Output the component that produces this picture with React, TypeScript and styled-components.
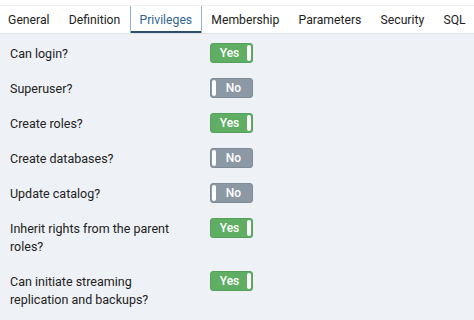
import styled, { createGlobalStyle } from "styled-components";

// #eef1f5 (content bg)
// #5fae63 (yes), #8d98a5 (no)
// #326690 (active tab)

const GlobalStyle = createGlobalStyle`
  body {
    margin: 0;
    background: #ffffff;
    font-family: Roboto, "Liberation Sans", sans-serif;
    color: #222222;
  }
`;

const Page = styled.div`
  width: 474px;
  height: 320px;
  display: flex;
  flex-direction: column;
  overflow: hidden;
`;

const TabBar = styled.div`
  flex-shrink: 0;
  margin-top: 5px;
  height: 27px;
  display: flex;
  flex-direction: row;
  border-top: 1px solid #eceef1;
  border-bottom: 1px solid #dfe3e8;
  margin-left: -1.5px;
`;

const Tab = styled.div<{ $active?: boolean }>`
  display: flex;
  align-items: center;
  padding: 0 8.6px;
  font-size: 12.2px;
  white-space: nowrap;
  color: ${(p) => (p.$active ? "#326690" : "#222222")};
  border-left: 1px solid ${(p) => (p.$active ? "#8fb1d3" : "transparent")};
  border-right: 1px solid ${(p) => (p.$active ? "#8fb1d3" : "transparent")};
  box-shadow: ${(p) => (p.$active ? "inset 0 -2px 0 #2d4e72" : "none")};
`;

const Body = styled.div`
  flex: 1;
  background: #eef1f5;
  padding-top: 9px;
  display: flex;
  flex-direction: column;
`;

const Row = styled.div`
  display: flex;
  flex-direction: row;
  align-items: flex-start;
  margin-bottom: 15px;
`;

const Label = styled.div`
  width: 170px;
  padding: 2px 22px 0 10px;
  font-size: 12.5px;
  line-height: 18px;
  color: #222222;
`;

const Switch = styled.div<{ $on: boolean }>`
  margin-left: 8px;
  width: 43px;
  height: 20px;
  box-sizing: border-box;
  border-radius: 3px;
  border: 1px solid ${(p) => (p.$on ? "#56a15a" : "#808b98")};
  background: ${(p) => (p.$on ? "#5fae63" : "#8d98a5")};
  display: flex;
  flex-direction: ${(p) => (p.$on ? "row" : "row-reverse")};
  align-items: stretch;
  padding: 1px;
`;

const SwitchText = styled.span`
  flex: 1;
  display: flex;
  align-items: center;
  justify-content: center;
  font-size: 12px;
  font-weight: 500;
  color: #ffffff;
`;

const Handle = styled.span`
  width: 4px;
  background: #ffffff;
  border-radius: 2px;
`;

const tabs = [
  "General",
  "Definition",
  "Privileges",
  "Membership",
  "Parameters",
  "Security",
  "SQL",
];

const privileges = [
  { label: "Can login?", on: true },
  { label: "Superuser?", on: false },
  { label: "Create roles?", on: true },
  { label: "Create databases?", on: false },
  { label: "Update catalog?", on: false },
  { label: "Inherit rights from the parent roles?", on: true },
  { label: "Can initiate streaming replication and backups?", on: true },
];

export default function App() {
  return (
    <Page>
      <GlobalStyle />
      <TabBar>
        {tabs.map((t) => (
          <Tab key={t} $active={t === "Privileges"}>
            {t}
          </Tab>
        ))}
      </TabBar>
      <Body>
        {privileges.map((p) => (
          <Row key={p.label}>
            <Label>{p.label}</Label>
            <Switch $on={p.on}>
              <SwitchText>{p.on ? "Yes" : "No"}</SwitchText>
              <Handle />
            </Switch>
          </Row>
        ))}
      </Body>
    </Page>
  );
}
